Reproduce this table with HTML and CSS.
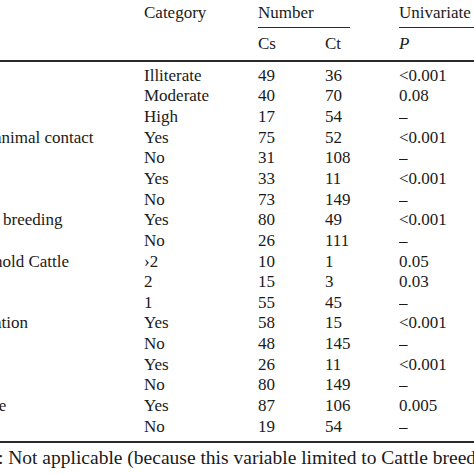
FILE: index.html
```html
<!DOCTYPE html>
<html lang="en">
<head>
<meta charset="utf-8">
<title>Table</title>
<link rel="stylesheet" href="styles.css">
</head>
<body>
<div class="page">
  <table class="t">
    <colgroup>
      <col class="c-lab"><col class="c-cat"><col class="c-cs"><col class="c-ct"><col class="c-p">
    </colgroup>
    <thead>
      <tr class="h1">
        <th></th>
        <th>Category</th>
        <th colspan="2"><span class="grp grp-num">Number</span></th>
        <th><span class="grp">Univariate</span></th>
      </tr>
      <tr class="h2">
        <th></th><th></th><th>Cs</th><th>Ct</th><th><i>P</i></th>
      </tr>
    </thead>
    <tbody>
      <tr class="first"><td></td><td>Illiterate</td><td>49</td><td>36</td><td>&lt;0.001</td></tr>
      <tr><td></td><td>Moderate</td><td>40</td><td>70</td><td>0.08</td></tr>
      <tr><td></td><td>High</td><td>17</td><td>54</td><td>–</td></tr>
      <tr><td>animal contact</td><td>Yes</td><td>75</td><td>52</td><td>&lt;0.001</td></tr>
      <tr><td></td><td>No</td><td>31</td><td>108</td><td>–</td></tr>
      <tr><td></td><td>Yes</td><td>33</td><td>11</td><td>&lt;0.001</td></tr>
      <tr><td></td><td>No</td><td>73</td><td>149</td><td>–</td></tr>
      <tr><td>l breeding</td><td>Yes</td><td>80</td><td>49</td><td>&lt;0.001</td></tr>
      <tr><td></td><td>No</td><td>26</td><td>111</td><td>–</td></tr>
      <tr><td>hold Cattle</td><td>›2</td><td>10</td><td>1</td><td>0.05</td></tr>
      <tr><td></td><td>2</td><td>15</td><td>3</td><td>0.03</td></tr>
      <tr><td></td><td>1</td><td>55</td><td>45</td><td>–</td></tr>
      <tr><td>ation</td><td>Yes</td><td>58</td><td>15</td><td>&lt;0.001</td></tr>
      <tr><td></td><td>No</td><td>48</td><td>145</td><td>–</td></tr>
      <tr><td></td><td>Yes</td><td>26</td><td>11</td><td>&lt;0.001</td></tr>
      <tr><td></td><td>No</td><td>80</td><td>149</td><td>–</td></tr>
      <tr><td>le</td><td>Yes</td><td>87</td><td>106</td><td>0.005</td></tr>
      <tr class="last"><td></td><td>No</td><td>19</td><td>54</td><td>–</td></tr>
    </tbody>
  </table>
  <p class="note">–: Not applicable (because this variable limited to Cattle breeders)</p>
</div>
</body>
</html>
```
FILE: styles.css
```css
html, body {
  margin: 0;
  padding: 0;
  background: #ffffff;
}
body {
  width: 474px;
  height: 474px;
  overflow: hidden;
  font-family: "Liberation Serif", "Times New Roman", serif;
  font-size: 17px;
  color: #1a1a1a;
}
.page {
  width: 474px;
  overflow: hidden;
}
.t {
  border-collapse: collapse;
  table-layout: fixed;
  width: 535px;
  margin-left: -6px;
}
.c-lab { width: 150px; }
.c-cat { width: 114px; }
.c-cs { width: 67px; }
.c-ct { width: 74px; }
.c-p { width: 130px; }
.t th, .t td {
  padding: 0;
  text-align: left;
  font-weight: normal;
  line-height: 20.65px;
  white-space: nowrap;
  overflow: hidden;
  vertical-align: top;
}
.h1 th {
  padding-top: 2.6px;
}
.grp {
  display: block;
  padding-bottom: 4px;
  border-bottom: 1px solid #2a2a2a;
}
.grp-num {
  margin-right: 49px;
}
.h2 th {
  padding-top: 5.85px;
  padding-bottom: 4.75px;
  border-bottom: 2px solid #2a2a2a;
}
.first td {
  padding-top: 4.1px;
}
.last td {
  padding-bottom: 3.7px;
  border-bottom: 2px solid #2a2a2a;
}
.note {
  margin: 5.2px 0 0 -11.8px;
  font-size: 19.5px;
  line-height: 20.65px;
  white-space: nowrap;
}
```
